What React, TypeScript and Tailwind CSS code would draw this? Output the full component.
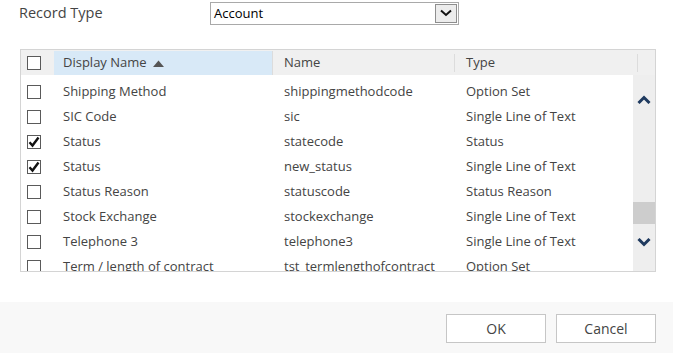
const ROWS = [
  { display: 'Shipping Method', name: 'shippingmethodcode', type: 'Option Set', checked: false },
  { display: 'SIC Code', name: 'sic', type: 'Single Line of Text', checked: false },
  { display: 'Status', name: 'statecode', type: 'Status', checked: true },
  { display: 'Status', name: 'new_status', type: 'Single Line of Text', checked: true },
  { display: 'Status Reason', name: 'statuscode', type: 'Status Reason', checked: false },
  { display: 'Stock Exchange', name: 'stockexchange', type: 'Single Line of Text', checked: false },
  { display: 'Telephone 3', name: 'telephone3', type: 'Single Line of Text', checked: false },
  { display: 'Term / length of contract', name: 'tst_termlengthofcontract', type: 'Option Set', checked: false },
];

function Check({ checked }: { checked: boolean }) {
  return (
    <span className="flex h-[14px] w-[14px] items-center justify-center border border-[#5a5a5a] bg-white">
      {checked && (
        <svg width="12" height="12" viewBox="0 0 12 12">
          <path d="M1.5 6.2 L4.5 9.5 L10.5 1.5" fill="none" stroke="#111" strokeWidth="2.4" />
        </svg>
      )}
    </span>
  );
}

function Chevron({ up }: { up?: boolean }) {
  return (
    <svg width="14" height="9" viewBox="0 0 14 9">
      <path
        d={up ? 'M1.5 8 L7 2.5 L12.5 8' : 'M1.5 1 L7 6.5 L12.5 1'}
        fill="none"
        stroke="#1f3a5f"
        strokeWidth="3"
      />
    </svg>
  );
}

export default function App() {
  return (
    <div className="flex h-[353px] w-[673px] flex-col bg-white font-['Open_Sans','Noto_Sans',sans-serif] text-[13px] text-[#444]">
      {/* record type picker */}
      <div className="flex h-[26px] items-center pl-[19px]">
        <span className="w-[191px] text-[14.5px] text-[#444]">Record Type</span>
        <div className="flex h-[23px] w-[249px] items-center border border-[#a9a9a9] bg-white">
          <span className="flex-1 pl-[3px] text-[13px] leading-none text-black">Account</span>
          <span className="mr-[1px] flex h-[19px] w-[22px] items-center justify-center border border-[#8e8e8e] bg-[#ececec]">
            <svg width="12" height="8" viewBox="0 0 12 8">
              <path d="M1 1.5 L6 6 L11 1.5" fill="none" stroke="#111" strokeWidth="2" />
            </svg>
          </span>
        </div>
      </div>

      {/* grid */}
      <div className="ml-[20px] mt-[23px] flex h-[223px] w-[636px] flex-col overflow-hidden border border-[#d4d4d4]">
        <div className="flex h-[25px] shrink-0 items-center bg-[#f0f0f0] pt-[1px]">
          <div className="flex w-[33px] items-center pl-[6px]">
            <Check checked={false} />
          </div>
          <div className="flex h-full w-[218px] items-center gap-[6px] bg-[#d8e9f7] pl-[9px]">
            <span>Display Name</span>
            <svg width="11" height="7" viewBox="0 0 11 7">
              <path d="M0 7 L5.5 0.5 L11 7 Z" fill="#555" />
            </svg>
          </div>
          <div className="flex h-full w-[182px] items-center border-l border-[#dcdcdc] pl-[11px]">Name</div>
          <div className="flex h-[18px] w-[183px] items-center border-l border-[#dcdcdc] pl-[11px]">Type</div>
          <div className="h-[18px] flex-1 border-l border-[#dcdcdc]" />
        </div>
        <div className="flex min-h-0 flex-1">
          <div className="flex-1 overflow-hidden pt-[4px]">
            {ROWS.map((r, i) => (
              <div key={i} className="flex h-[25px] items-center">
                <div className="flex w-[33px] items-center pl-[6px]">
                  <Check checked={r.checked} />
                </div>
                <div className="w-[218px] pl-[9px]">{r.display}</div>
                <div className="w-[182px] pl-[12px]">{r.name}</div>
                <div className="pl-[12px]">{r.type}</div>
              </div>
            ))}
          </div>
          <div className="flex w-[22px] flex-col bg-[#eeeeee]">
            <div className="flex h-[127px] justify-center pt-[20px]">
              <Chevron up />
            </div>
            <div className="h-[22px] bg-[#cdcdcd]" />
            <div className="flex h-[26px] justify-center pt-[14px]">
              <Chevron />
            </div>
          </div>
        </div>
      </div>

      {/* footer */}
      <div className="mt-[30px] flex flex-1 justify-end gap-[10px] bg-[#f8f8f8] pr-[17px] pt-[12px]">
        <button className="h-[29px] w-[100px] border border-[#c6c6c6] bg-white text-[14px] text-[#444]">OK</button>
        <button className="h-[29px] w-[100px] border border-[#c6c6c6] bg-white text-[14px] text-[#444]">Cancel</button>
      </div>
    </div>
  );
}
